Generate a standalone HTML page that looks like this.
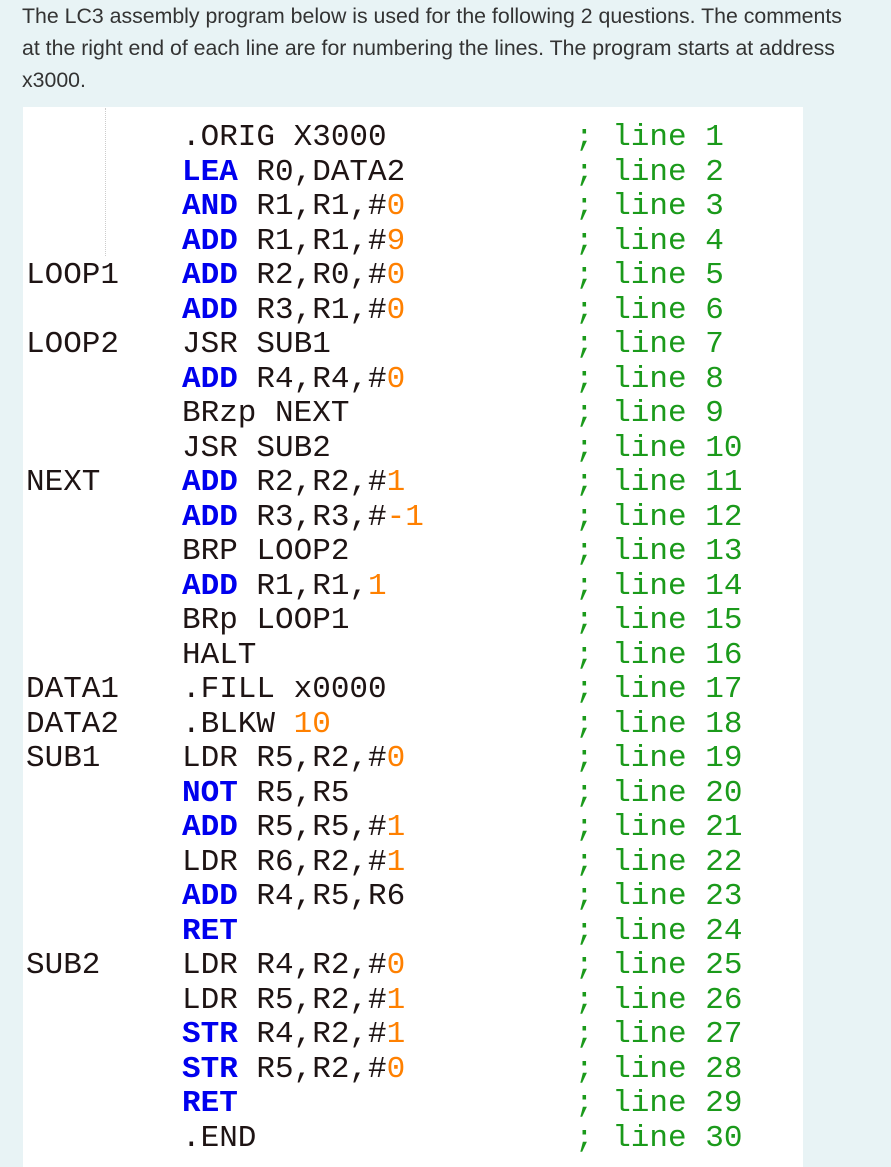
<!DOCTYPE html>
<html><head><meta charset="utf-8"><style>
body{margin:0;width:891px;height:1163px;background:#e8f3f5;overflow:hidden;position:relative;font-family:"Liberation Sans",sans-serif}
.intro{position:absolute;left:22px;top:0px;width:880px;font-size:21.3px;line-height:32px;color:#333;white-space:nowrap}
.box{position:absolute;left:23px;top:107px;width:780px;height:1060px;background:#fff}
.dot{position:absolute;left:105px;top:108px;height:148px;border-left:1px dotted #ccc}
.l{position:absolute;left:0;height:34.5px;width:891px;font-family:"Liberation Mono","Courier New",monospace;font-size:31px;line-height:34.5px;color:#1e1414;white-space:pre}
.l span{position:absolute}
.a{left:26px}.b{left:182px}.c{left:575px;color:#1b9a1b}
.k{color:#0000ee;font-weight:bold}.n{color:#ff8000;font-weight:normal}
</style></head><body>
<div class="intro">The LC3 assembly program below is used for the following 2 questions. The comments<br>at the right end of each line are for numbering the lines. The program starts at address<br>x3000.</div>
<div class="box"></div><div class="dot"></div>
<div class="l" style="top:121px"><span class="b">.ORIG X3000</span><span class="c">; line 1</span></div>
<div class="l" style="top:155.5px"><span class="b"><b class="k">LEA</b> R0,DATA2</span><span class="c">; line 2</span></div>
<div class="l" style="top:190px"><span class="b"><b class="k">AND</b> R1,R1,#<b class="n">0</b></span><span class="c">; line 3</span></div>
<div class="l" style="top:224.5px"><span class="b"><b class="k">ADD</b> R1,R1,#<b class="n">9</b></span><span class="c">; line 4</span></div>
<div class="l" style="top:259px"><span class="a">LOOP1</span><span class="b"><b class="k">ADD</b> R2,R0,#<b class="n">0</b></span><span class="c">; line 5</span></div>
<div class="l" style="top:293.5px"><span class="b"><b class="k">ADD</b> R3,R1,#<b class="n">0</b></span><span class="c">; line 6</span></div>
<div class="l" style="top:328px"><span class="a">LOOP2</span><span class="b">JSR SUB1</span><span class="c">; line 7</span></div>
<div class="l" style="top:362.5px"><span class="b"><b class="k">ADD</b> R4,R4,#<b class="n">0</b></span><span class="c">; line 8</span></div>
<div class="l" style="top:397px"><span class="b">BRzp NEXT</span><span class="c">; line 9</span></div>
<div class="l" style="top:431.5px"><span class="b">JSR SUB2</span><span class="c">; line 10</span></div>
<div class="l" style="top:466px"><span class="a">NEXT</span><span class="b"><b class="k">ADD</b> R2,R2,#<b class="n">1</b></span><span class="c">; line 11</span></div>
<div class="l" style="top:500.5px"><span class="b"><b class="k">ADD</b> R3,R3,#<b class="n">-1</b></span><span class="c">; line 12</span></div>
<div class="l" style="top:535px"><span class="b">BRP LOOP2</span><span class="c">; line 13</span></div>
<div class="l" style="top:569.5px"><span class="b"><b class="k">ADD</b> R1,R1,<b class="n">1</b></span><span class="c">; line 14</span></div>
<div class="l" style="top:604px"><span class="b">BRp LOOP1</span><span class="c">; line 15</span></div>
<div class="l" style="top:638.5px"><span class="b">HALT</span><span class="c">; line 16</span></div>
<div class="l" style="top:673px"><span class="a">DATA1</span><span class="b">.FILL x0000</span><span class="c">; line 17</span></div>
<div class="l" style="top:707.5px"><span class="a">DATA2</span><span class="b">.BLKW <b class="n">10</b></span><span class="c">; line 18</span></div>
<div class="l" style="top:742px"><span class="a">SUB1</span><span class="b">LDR R5,R2,#<b class="n">0</b></span><span class="c">; line 19</span></div>
<div class="l" style="top:776.5px"><span class="b"><b class="k">NOT</b> R5,R5</span><span class="c">; line 20</span></div>
<div class="l" style="top:811px"><span class="b"><b class="k">ADD</b> R5,R5,#<b class="n">1</b></span><span class="c">; line 21</span></div>
<div class="l" style="top:845.5px"><span class="b">LDR R6,R2,#<b class="n">1</b></span><span class="c">; line 22</span></div>
<div class="l" style="top:880px"><span class="b"><b class="k">ADD</b> R4,R5,R6</span><span class="c">; line 23</span></div>
<div class="l" style="top:914.5px"><span class="b"><b class="k">RET</b></span><span class="c">; line 24</span></div>
<div class="l" style="top:949px"><span class="a">SUB2</span><span class="b">LDR R4,R2,#<b class="n">0</b></span><span class="c">; line 25</span></div>
<div class="l" style="top:983.5px"><span class="b">LDR R5,R2,#<b class="n">1</b></span><span class="c">; line 26</span></div>
<div class="l" style="top:1018px"><span class="b"><b class="k">STR</b> R4,R2,#<b class="n">1</b></span><span class="c">; line 27</span></div>
<div class="l" style="top:1052.5px"><span class="b"><b class="k">STR</b> R5,R2,#<b class="n">0</b></span><span class="c">; line 28</span></div>
<div class="l" style="top:1087px"><span class="b"><b class="k">RET</b></span><span class="c">; line 29</span></div>
<div class="l" style="top:1121.5px"><span class="b">.END</span><span class="c">; line 30</span></div>
</body></html>
